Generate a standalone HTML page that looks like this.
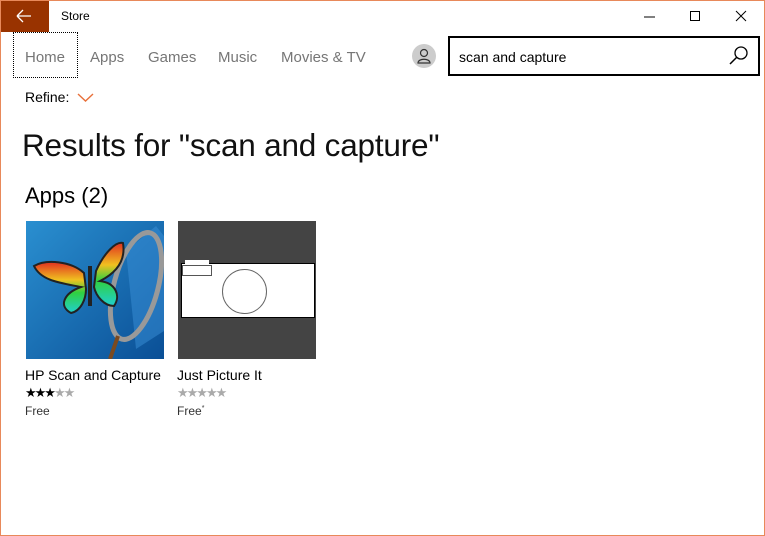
<!DOCTYPE html>
<html><head><meta charset="utf-8"><style>
*{margin:0;padding:0;box-sizing:border-box}
body{width:765px;height:536px;overflow:hidden;background:#fff;font-family:"Liberation Sans",sans-serif;position:relative;color:#000}
.frame{position:absolute;left:0;top:0;width:765px;height:536px;border:1px solid #e8895a;pointer-events:none}
.abs{position:absolute;white-space:nowrap}
.nav{font-size:15px;color:#767676;top:49px}
</style></head><body>
<div class="abs" style="left:1px;top:1px;width:48px;height:31px;background:#993300"></div>
<svg class="abs" style="left:16px;top:9px" width="16" height="14"><path d="M1 7H15M1 7L7 1M1 7L7 13" stroke="#fff" stroke-width="1.3" fill="none"/></svg>
<div class="abs" style="left:61px;top:9px;font-size:12px">Store</div>
<svg class="abs" style="left:640px;top:10px" width="110" height="14"><path d="M4 7H15" stroke="#000"/><rect x="50.5" y="1.5" width="9" height="9" fill="none" stroke="#000"/><path d="M96 1L106 11M106 1L96 11" stroke="#000"/></svg>
<div class="abs" style="left:13px;top:32px;width:65px;height:46px;border:1px dotted #000"></div>
<div class="abs nav" style="left:25px">Home</div>
<div class="abs nav" style="left:90px">Apps</div>
<div class="abs nav" style="left:148px">Games</div>
<div class="abs nav" style="left:218px">Music</div>
<div class="abs nav" style="left:281px">Movies &amp; TV</div>
<div class="abs" style="left:412px;top:44px;width:24px;height:24px;border-radius:50%;background:#ccc"></div>
<svg class="abs" style="left:412px;top:44px" width="24" height="24"><circle cx="12" cy="9" r="3.5" fill="none" stroke="#333" stroke-width="1.2"/><path d="M6 19C6 14 18 14 18 19Z" fill="none" stroke="#333" stroke-width="1.2"/></svg>
<div class="abs" style="left:448px;top:36px;width:312px;height:40px;border:2px solid #000"></div>
<div class="abs" style="left:459px;top:49px;font-size:14px">scan and capture</div>
<svg class="abs" style="left:728px;top:45px" width="22" height="22"><circle cx="13" cy="8" r="6" fill="none" stroke="#000" stroke-width="1.3"/><path d="M9 12L2 19" stroke="#000" stroke-width="1.5"/></svg>
<div class="abs" style="left:25px;top:89px;font-size:14px">Refine:</div>
<svg class="abs" style="left:77px;top:92px" width="18" height="12"><path d="M1 2L8.5 9L16 2" stroke="#e8703a" stroke-width="1.4" fill="none"/></svg>
<div class="abs" style="left:22px;top:127px;font-size:31.5px;color:#111;letter-spacing:-0.2px">Results for "scan and capture"</div>
<div class="abs" style="left:25px;top:183px;font-size:22px">Apps (2)</div>
<svg class="abs" style="left:26px;top:221px" width="138" height="138">
<defs><linearGradient id="bg" x1="0" y1="0" x2="1" y2="1"><stop offset="0" stop-color="#2a8fd0"/><stop offset="1" stop-color="#0a4f96"/></linearGradient><linearGradient id="w" x1="0" y1="0" x2="0" y2="1"><stop offset="0" stop-color="#e03020"/><stop offset=".35" stop-color="#f0c020"/><stop offset=".6" stop-color="#30d040"/><stop offset="1" stop-color="#20d0d0"/></linearGradient></defs>
<rect width="138" height="138" fill="url(#bg)"/>
<path d="M100 30L130 5L138 15V110L110 128Z" fill="#3a8fd8" opacity=".5"/>
<ellipse cx="110" cy="65" rx="22" ry="55" fill="none" stroke="#999" stroke-width="5" transform="rotate(15 110 65)"/>
<path d="M92 115L84 138" stroke="#7a4a20" stroke-width="4"/>
<path d="M58 52C45 40 20 38 8 45C15 60 35 62 55 66C38 72 32 85 45 92C55 90 60 78 60 68Z" fill="url(#w)" stroke="#222" stroke-width="2"/>
<path d="M70 50C78 32 90 20 97 22C100 40 90 52 74 60C90 62 95 75 88 85C78 85 70 75 68 66Z" fill="url(#w)" stroke="#222" stroke-width="2"/>
<path d="M64 45V85" stroke="#222" stroke-width="4"/>
</svg>
<div class="abs" style="left:178px;top:221px;width:138px;height:138px;background:#444"></div>
<div class="abs" style="left:181px;top:263px;width:134px;height:55px;background:#fff;border:1px solid #000"></div>
<div class="abs" style="left:185px;top:260px;width:24px;height:4px;background:#fff"></div>
<div class="abs" style="left:182px;top:265px;width:30px;height:11px;border:1px solid #555"></div>
<div class="abs" style="left:222px;top:269px;width:45px;height:45px;border:1.5px solid #666;border-radius:50%"></div>
<div class="abs" style="left:25px;top:367px;font-size:14px">HP Scan and Capture</div>
<div class="abs" style="left:177px;top:367px;font-size:14px">Just Picture It</div>
<div class="abs" style="left:25px;top:385px;font-size:13px;letter-spacing:-2px">★★★<span style="color:#aaa">★★</span></div>
<div class="abs" style="left:177px;top:385px;font-size:13px;letter-spacing:-2px;color:#aaa">★★★★★</div>
<div class="abs" style="left:25px;top:404px;font-size:12px;color:#333">Free</div>
<div class="abs" style="left:177px;top:404px;font-size:12px;color:#333">Free<sup style="font-size:7px">*</sup></div>
<div class="frame"></div>
</body></html>
